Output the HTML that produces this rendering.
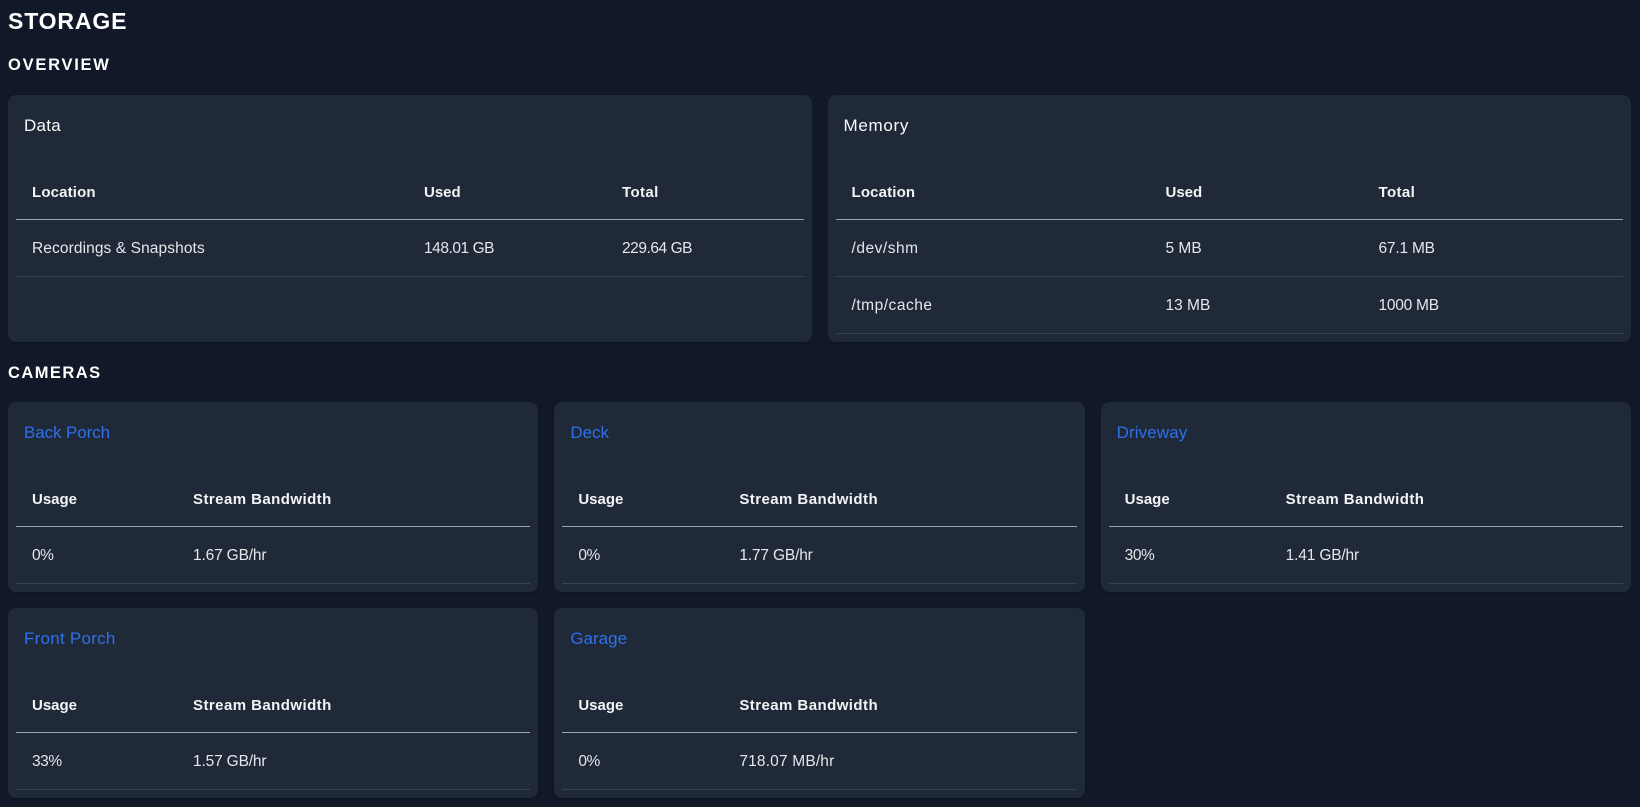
<!DOCTYPE html>
<html lang="en">
<head>
<meta charset="utf-8">
<title>Storage</title>
<style>
*{box-sizing:border-box;margin:0;padding:0}
html,body{width:1640px;height:807px;overflow:hidden;background:#111827;color:#fff;font-family:"Liberation Sans",sans-serif}
.h{position:absolute;left:8px;white-space:nowrap;font-weight:700;color:#fff}
.h1{top:7px;font-size:23px;line-height:28px;letter-spacing:.85px}
.h2{font-size:16.5px;line-height:20px;letter-spacing:1.45px}
.card{position:absolute;background:#1f2937;border-radius:8px;box-shadow:0 1px 2px rgba(0,0,0,.25)}
.title{position:absolute;left:16px;top:20px;font-size:17px;line-height:22px;white-space:nowrap;color:#f9fafb}
.title.b{color:#2f70ec}
table{position:absolute;left:8px;top:67px;width:calc(100% - 16px);border-collapse:collapse;table-layout:fixed;font-size:15.5px;color:#e5e7eb}
th{height:57px;text-align:left;padding:5px 0 0 16px;font-weight:700;border-bottom:1px solid #9ca3af;font-size:15px;color:#f3f4f6}
td{height:57px;padding:3px 0 0 16px;border-bottom:1px solid #374151;white-space:nowrap}
.n{letter-spacing:-.45px}
.r{letter-spacing:-.16px}
.p{letter-spacing:.52px}
.s{letter-spacing:.44px}
.t{letter-spacing:.4px}
.l{letter-spacing:.15px}
</style>
</head>
<body>
<div class="h h1">STORAGE</div>
<div class="h h2" style="top:55px;letter-spacing:1.75px">OVERVIEW</div>

<div class="card" style="left:8px;top:95px;width:803.5px;height:247px">
  <div class="title" style="letter-spacing:.25px">Data</div>
  <table><colgroup><col style="width:392px"><col style="width:198px"><col></colgroup>
    <tr><th class="l">Location</th><th>Used</th><th class="t">Total</th></tr>
    <tr><td style="letter-spacing:.1px">Recordings &amp; Snapshots</td><td class="n">148.01 GB</td><td class="n">229.64 GB</td></tr>
  </table>
</div>

<div class="card" style="left:827.5px;top:95px;width:803.5px;height:247px">
  <div class="title" style="letter-spacing:.7px">Memory</div>
  <table><colgroup><col style="width:314px"><col style="width:213px"><col></colgroup>
    <tr><th class="l">Location</th><th>Used</th><th class="t">Total</th></tr>
    <tr><td class="p">/dev/shm</td><td>5 MB</td><td style="letter-spacing:-.2px">67.1 MB</td></tr>
    <tr><td class="p">/tmp/cache</td><td>13 MB</td><td style="letter-spacing:-.25px">1000 MB</td></tr>
  </table>
</div>

<div class="h h2" style="top:363px">CAMERAS</div>

<div class="card" style="left:8px;top:402px;width:530.33px;height:190px">
  <div class="title b" style="letter-spacing:-.1px">Back Porch</div>
  <table><colgroup><col style="width:161px"><col></colgroup>
    <tr><th>Usage</th><th class="s">Stream Bandwidth</th></tr>
    <tr><td class="n">0%</td><td class="r">1.67 GB/hr</td></tr>
  </table>
</div>
<div class="card" style="left:554.33px;top:402px;width:530.33px;height:190px">
  <div class="title b">Deck</div>
  <table><colgroup><col style="width:161px"><col></colgroup>
    <tr><th>Usage</th><th class="s">Stream Bandwidth</th></tr>
    <tr><td class="n">0%</td><td class="r">1.77 GB/hr</td></tr>
  </table>
</div>
<div class="card" style="left:1100.67px;top:402px;width:530.33px;height:190px">
  <div class="title b" style="letter-spacing:.1px">Driveway</div>
  <table><colgroup><col style="width:161px"><col></colgroup>
    <tr><th>Usage</th><th class="s">Stream Bandwidth</th></tr>
    <tr><td class="n">30%</td><td class="r">1.41 GB/hr</td></tr>
  </table>
</div>
<div class="card" style="left:8px;top:608px;width:530.33px;height:190px">
  <div class="title b" style="letter-spacing:.25px">Front Porch</div>
  <table><colgroup><col style="width:161px"><col></colgroup>
    <tr><th>Usage</th><th class="s">Stream Bandwidth</th></tr>
    <tr><td class="n">33%</td><td class="r">1.57 GB/hr</td></tr>
  </table>
</div>
<div class="card" style="left:554.33px;top:608px;width:530.33px;height:190px">
  <div class="title b">Garage</div>
  <table><colgroup><col style="width:161px"><col></colgroup>
    <tr><th>Usage</th><th class="s">Stream Bandwidth</th></tr>
    <tr><td class="n">0%</td><td style="letter-spacing:.17px">718.07 MB/hr</td></tr>
  </table>
</div>
</body>
</html>
